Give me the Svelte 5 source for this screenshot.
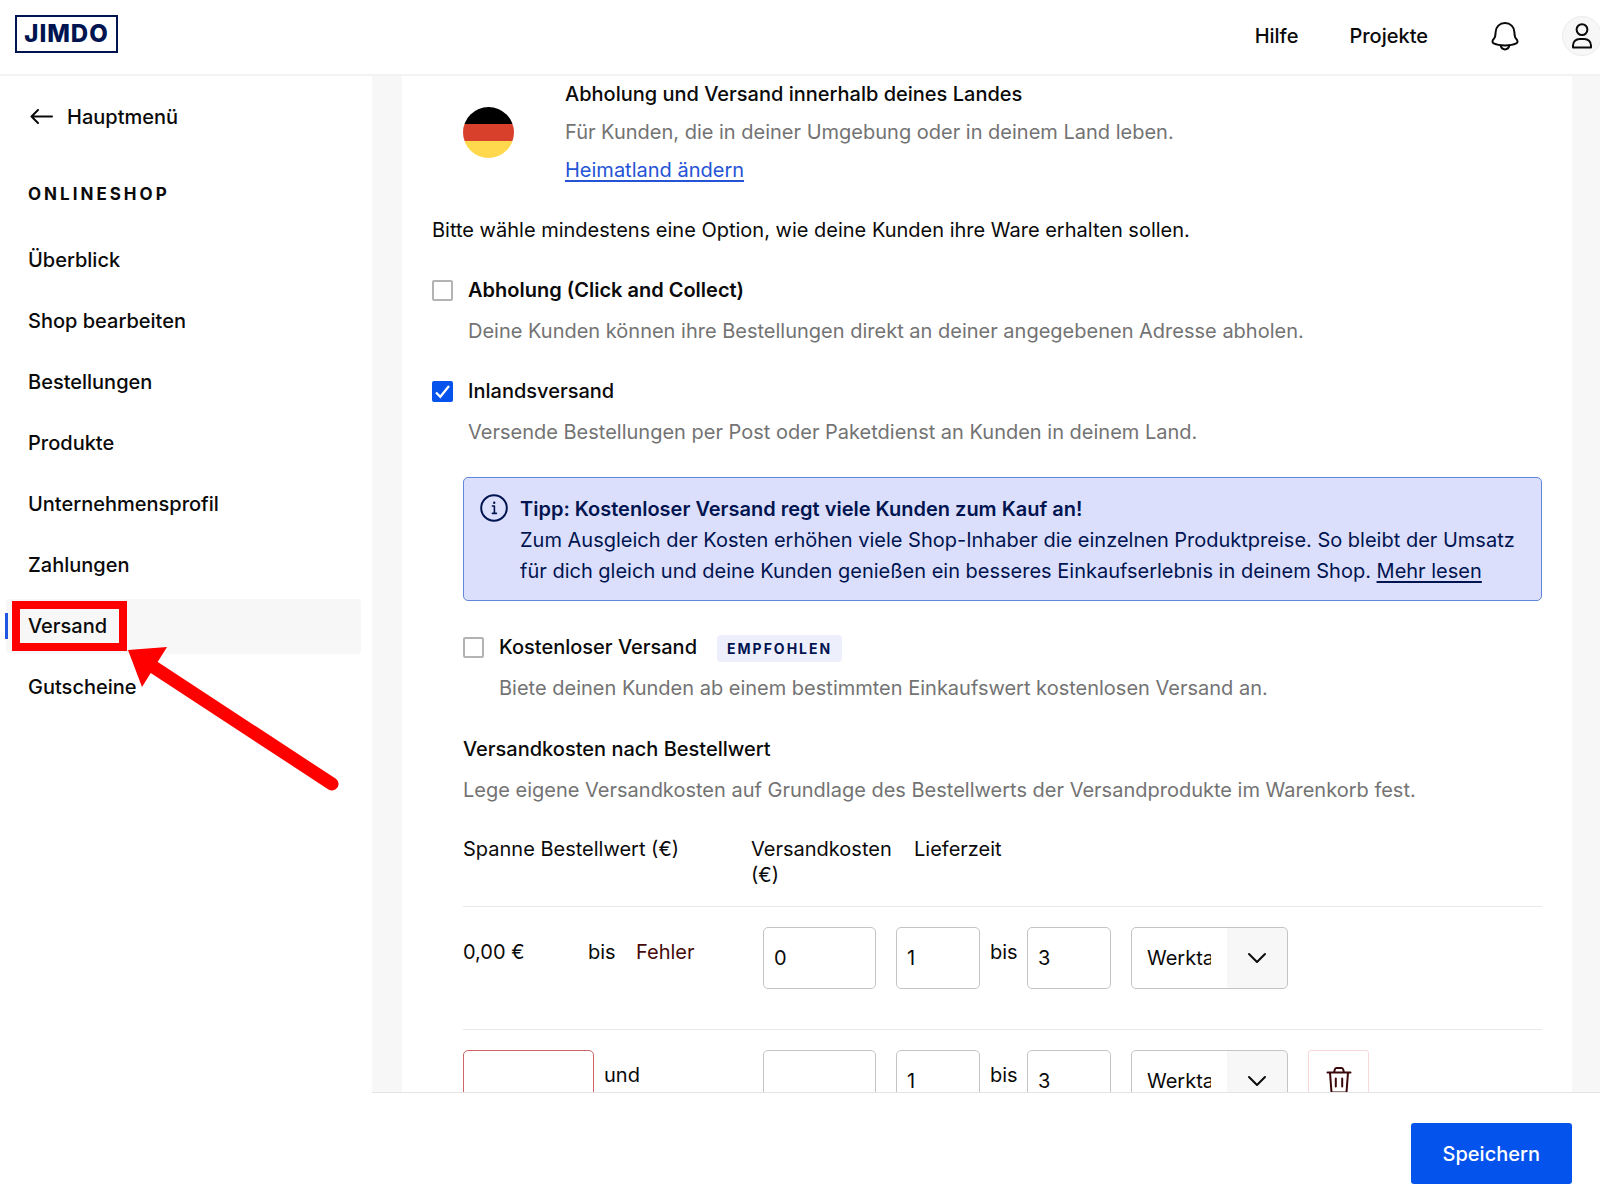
<script>
  const menu = [
    'Überblick',
    'Shop bearbeiten',
    'Bestellungen',
    'Produkte',
    'Unternehmensprofil',
    'Zahlungen',
    'Versand',
    'Gutscheine',
  ];
  const active = 'Versand';

  let pickup = $state(false);
  let domestic = $state(true);
  let free = $state(false);
</script>

{#snippet delivery(row)}
  <input class="field days" aria-label="Lieferzeit von, Zeile {row}" value="1" />
  <span class="between">bis</span>
  <input class="field days" aria-label="Lieferzeit bis, Zeile {row}" value="3" />
  <span class="select">
    <select aria-label="Einheit der Lieferzeit, Zeile {row}">
      <option>Werktage</option>
      <option>Wochen</option>
    </select>
    <svg class="chevron" viewBox="0 0 20 12" aria-hidden="true">
      <path d="M2 2 L10 10 L18 2" />
    </svg>
  </span>
{/snippet}

<div class="app">
  <header class="topbar">
    <a class="logo" href="#start">JIMDO</a>
    <nav class="topnav" aria-label="Konto">
      <a href="#hilfe">Hilfe</a>
      <a href="#projekte">Projekte</a>
      <button class="icon-button bell" aria-label="Benachrichtigungen">
        <svg viewBox="0 0 28 30" aria-hidden="true">
          <path d="M14 2 C8.6 2 4.7 6 4.6 11.3 C4.5 15.2 4.3 16.6 2.7 18 C1.2 19.4 1 21.6 2.7 22.4 C5.4 23.7 9.6 24.4 14 24.4 C18.4 24.4 22.6 23.7 25.3 22.4 C27 21.6 26.8 19.4 25.3 18 C23.7 16.6 23.5 15.2 23.4 11.3 C23.3 6 19.4 2 14 2 Z" />
          <path d="M9.6 24.6 C10.2 27 11.8 28.4 14 28.4 C16.2 28.4 17.8 27 18.4 24.6" />
        </svg>
      </button>
      <button class="icon-button avatar" aria-label="Profil">
        <svg viewBox="0 0 22 28" aria-hidden="true">
          <circle cx="11" cy="7.6" r="5.4" />
          <path d="M2 25.6 V23.6 C2 19.6 5 17 8.6 17 H13.4 C17 17 20 19.6 20 23.6 V25.6 Z" />
        </svg>
      </button>
    </nav>
  </header>

  <div class="body">
    <aside class="sidebar">
      <a class="back" href="#hauptmenue">
        <svg viewBox="0 0 24 16" aria-hidden="true">
          <path d="M22 7.5 H1.5 M8 1 L1.5 7.5 L8 14" />
        </svg>
        Hauptmenü
      </a>
      <h2>Onlineshop</h2>
      <ul>
        {#each menu as item}
          <li>
            <a href="#{item}" class:active={item === active} aria-current={item === active ? 'page' : undefined}>
              {item}
            </a>
            {#if item === active}
              <span class="marker"></span>
              <svg class="pointer" viewBox="0 0 220 150" aria-hidden="true">
                <path class="shaft" d="M32 25 L212 143" />
                <path class="head" d="M8 9 L47 6 L22 46 Z" />
              </svg>
            {/if}
          </li>
        {/each}
      </ul>
    </aside>

    <div class="main">
      <main class="scroll">
        <div class="panel">
          <section class="country">
            <svg class="flag" viewBox="0 0 51 51" role="img" aria-label="Deutschland">
              <clipPath id="round"><circle cx="25.5" cy="25.5" r="25.5" /></clipPath>
              <g clip-path="url(#round)">
                <rect width="51" height="17" fill="#000" />
                <rect y="17" width="51" height="17" fill="#d8402c" />
                <rect y="34" width="51" height="17" fill="#ffd84d" />
              </g>
            </svg>
            <div class="country-text">
              <h3>Abholung und Versand innerhalb deines Landes</h3>
              <p class="muted">Für Kunden, die in deiner Umgebung oder in deinem Land leben.</p>
              <a href="#heimatland">Heimatland ändern</a>
            </div>
          </section>

          <p class="prompt">Bitte wähle mindestens eine Option, wie deine Kunden ihre Ware erhalten sollen.</p>

          <div class="option">
            <label class="strong"><input type="checkbox" bind:checked={pickup} />Abholung (Click and Collect)</label>
            <p class="muted">Deine Kunden können ihre Bestellungen direkt an deiner angegebenen Adresse abholen.</p>
          </div>

          <div class="option">
            <label><input type="checkbox" bind:checked={domestic} />Inlandsversand</label>
            <p class="muted">Versende Bestellungen per Post oder Paketdienst an Kunden in deinem Land.</p>
          </div>

          <div class="nested">
            <div class="tip">
              <svg viewBox="0 0 28 28" aria-hidden="true">
                <circle cx="14" cy="14" r="12.8" />
                <path class="thin" d="M12.4 12 H14.4 V19.2 M12.4 19.4 H16.4" />
                <circle class="dot" cx="14.2" cy="8.8" r="1.2" />
              </svg>
              <div>
                <strong>Tipp: Kostenloser Versand regt viele Kunden zum Kauf an!</strong>
                <p>
                  Zum Ausgleich der Kosten erhöhen viele Shop-Inhaber die einzelnen Produktpreise. So bleibt der Umsatz
                  für dich gleich und deine Kunden genießen ein besseres Einkaufserlebnis in deinem Shop.
                  <a href="#mehr">Mehr lesen</a>
                </p>
              </div>
            </div>

            <div class="option">
              <div class="label-row">
                <label><input type="checkbox" bind:checked={free} />Kostenloser Versand</label>
                <span class="badge">Empfohlen</span>
              </div>
              <p class="muted">Biete deinen Kunden ab einem bestimmten Einkaufswert kostenlosen Versand an.</p>
            </div>

            <div class="costs">
              <h3>Versandkosten nach Bestellwert</h3>
              <p class="muted">Lege eigene Versandkosten auf Grundlage des Bestellwerts der Versandprodukte im Warenkorb fest.</p>
            </div>

            <table>
              <colgroup>
                <col class="c-range" />
                <col class="c-cost" />
                <col class="c-gap" />
                <col />
              </colgroup>
              <thead>
                <tr>
                  <th scope="col">Spanne Bestellwert (€)</th>
                  <th scope="col" colspan="2">Versandkosten (€)</th>
                  <th scope="col">Lieferzeit</th>
                </tr>
              </thead>
              <tbody>
                <tr>
                  <td>
                    <div class="cells">
                      <span class="amount">0,00 €</span>
                      <span class="until">bis</span>
                      <span class="error">Fehler</span>
                    </div>
                  </td>
                  <td class="cost"><input class="field price" aria-label="Versandkosten, Zeile 1" value="0" /></td>
                  <td colspan="2"><div class="cells">{@render delivery(1)}</div></td>
                </tr>
                <tr>
                  <td>
                    <div class="cells">
                      <input class="field limit" aria-label="Bestellwert ab" aria-invalid="true" value="" />
                      <span class="between">und</span>
                    </div>
                  </td>
                  <td class="cost"><input class="field price" aria-label="Versandkosten, Zeile 2" value="" /></td>
                  <td colspan="2">
                    <div class="cells">
                      {@render delivery(2)}
                      <button class="delete" aria-label="Zeile löschen">
                        <svg viewBox="0 0 26 28" aria-hidden="true">
                          <path d="M1.5 6.5 H24.5 M4 6.5 L5.5 26.5 H20.5 L22 6.5 M8 6.2 L9 3 Q9.4 2 10.5 2 H15.5 Q16.6 2 17 3 L18 6.2 M9.8 12.5 V20.5 M16.2 12.5 V20.5" />
                        </svg>
                      </button>
                    </div>
                  </td>
                </tr>
              </tbody>
            </table>
          </div>
        </div>
      </main>

      <footer>
        <button class="save">Speichern</button>
      </footer>
    </div>
  </div>
</div>

<style>
  :global(body) {
    margin: 0;
    background: #fff;
  }

  .app {
    display: flex;
    flex-direction: column;
    height: 100vh;
    overflow: hidden;
    font: 400 20px/30px Inter, 'Liberation Sans', sans-serif;
    color: #0a0a0a;
  }

  .app *,
  .app {
    box-sizing: border-box;
  }

  h2, h3, p, ul {
    margin: 0;
    padding: 0;
  }

  h3 {
    font-size: 20px;
    font-weight: 500;
  }

  input, select, button {
    font: inherit;
    color: inherit;
  }

  svg {
    flex: none;
    fill: none;
    stroke: currentColor;
    stroke-width: 2;
    stroke-linecap: round;
    stroke-linejoin: round;
  }

  .muted {
    color: #737373;
  }

  /* Top bar */
  .topbar {
    display: flex;
    flex: none;
    align-items: flex-start;
    justify-content: space-between;
    height: 76px;
    padding: 15px 0 0 15px;
    border-bottom: 2px solid #f3f3f3;
    overflow: hidden;
  }

  .logo {
    display: flex;
    align-items: center;
    justify-content: center;
    width: 103px;
    height: 38px;
    border: 2px solid #001450;
    color: #001450;
    font-size: 24px;
    font-weight: 800;
    letter-spacing: 1px;
    text-decoration: none;
  }

  .topnav {
    display: flex;
    align-items: center;
    height: 42px;
    margin-right: -2px;
  }

  .topnav a {
    margin-right: 51px;
    color: inherit;
    font-weight: 500;
    text-decoration: none;
  }

  .icon-button {
    display: flex;
    align-items: center;
    justify-content: center;
    padding: 0;
    border: 0;
    background: none;
  }

  .bell {
    width: 28px;
    margin: 0 43px 0 12px;
  }

  .bell svg {
    width: 28px;
    height: 30px;
  }

  .avatar {
    width: 40px;
    height: 40px;
    border: 1px solid #ececec;
    border-radius: 50%;
    background: #f7f7f7;
  }

  .avatar svg {
    width: 22px;
    height: 28px;
  }

  .body {
    display: flex;
    flex: 1;
    min-height: 0;
  }

  /* Sidebar */
  .sidebar {
    flex: none;
    width: 372px;
    padding: 26px 11px 0 6px;
  }

  .back {
    display: flex;
    align-items: center;
    gap: 13px;
    padding-left: 24px;
    color: inherit;
    font-weight: 500;
    text-decoration: none;
  }

  .back svg {
    width: 24px;
    height: 16px;
  }

  .sidebar h2 {
    margin: 47px 0 24px;
    padding-left: 22px;
    font-size: 17px;
    font-weight: 700;
    letter-spacing: 3px;
    text-transform: uppercase;
  }

  .sidebar ul {
    display: flex;
    flex-direction: column;
    gap: 6px;
    list-style: none;
  }

  .sidebar li {
    position: relative;
  }

  .sidebar li a {
    display: block;
    padding: 12px 22px 13px;
    border-radius: 4px;
    color: inherit;
    font-weight: 500;
    text-decoration: none;
  }

  .sidebar li a.active {
    background: #f7f7f7;
  }

  .sidebar li a.active::before {
    content: '';
    position: absolute;
    top: 14px;
    left: -1px;
    width: 3px;
    height: 26px;
    background: #1f57e0;
  }

  .marker {
    position: absolute;
    top: 2px;
    left: 6px;
    width: 115px;
    height: 50px;
    border: 8px solid #fe0000;
  }

  .pointer {
    position: absolute;
    z-index: 1;
    top: 42px;
    left: 114px;
    width: 220px;
    height: 150px;
    pointer-events: none;
  }

  .pointer .shaft {
    stroke: #fe0000;
    stroke-width: 13;
  }

  .pointer .head {
    fill: #fe0000;
    stroke: none;
  }

  /* Content */
  .main {
    display: flex;
    flex: 1;
    flex-direction: column;
    min-width: 0;
  }

  .scroll {
    flex: 1;
    min-height: 0;
    padding: 0 28px 0 30px;
    background: #f7f7f7;
    overflow: hidden;
  }

  .panel {
    display: flex;
    flex-direction: column;
    gap: 30px;
    min-height: 100%;
    padding: 3px 30px 30px;
    background: #fff;
  }

  .country {
    display: flex;
    align-items: center;
    gap: 51px;
    padding-left: 31px;
  }

  .flag {
    width: 51px;
    height: 51px;
    stroke: none;
  }

  .country-text {
    display: flex;
    flex-direction: column;
    align-items: flex-start;
    gap: 8px;
  }

  .country-text a {
    color: #2453d6;
    text-decoration-thickness: 2px;
    text-underline-offset: 3px;
  }

  .option,
  .costs {
    display: flex;
    flex-direction: column;
    gap: 11px;
  }

  .option .muted {
    padding-left: 36px;
  }

  label {
    display: flex;
    align-items: center;
    gap: 15px;
    font-weight: 500;
  }

  label.strong {
    font-weight: 600;
  }

  input[type='checkbox'] {
    appearance: none;
    flex: none;
    width: 21px;
    height: 21px;
    margin: 0;
    border: 2px solid #b3b3b3;
    border-radius: 2px;
    background: #fff;
  }

  input[type='checkbox']:checked {
    border-color: #0453ed;
    background: #0453ed url("data:image/svg+xml,%3Csvg xmlns='http://www.w3.org/2000/svg' viewBox='0 0 17 17'%3E%3Cpath d='M2 9.5 L6.3 13.8 L15 3' fill='none' stroke='white' stroke-width='2.2'/%3E%3C/svg%3E") center / 17px 17px no-repeat;
  }

  .nested {
    display: flex;
    flex-direction: column;
    gap: 31px;
    padding-left: 31px;
  }

  .tip {
    display: flex;
    align-items: flex-start;
    gap: 12px;
    padding: 16px 16px 13px;
    border: 1px solid #5f86d8;
    border-radius: 5px;
    background: #dcdffc;
    color: #001450;
    line-height: 31px;
  }

  .tip svg {
    width: 28px;
    height: 28px;
  }

  .tip .thin {
    stroke-width: 1.6;
  }

  .tip .dot {
    fill: currentColor;
    stroke: none;
  }

  .tip strong {
    font-weight: 600;
  }

  .tip a {
    color: inherit;
    text-decoration-thickness: 2px;
    text-underline-offset: 3px;
  }

  .label-row {
    display: flex;
    align-items: flex-end;
    gap: 20px;
    height: 30px;
  }

  .badge {
    padding: 0 10px;
    border-radius: 4px;
    background: #eeeffd;
    color: #001450;
    font-size: 14px;
    font-weight: 700;
    line-height: 27px;
    letter-spacing: 2px;
    text-transform: uppercase;
  }

  /* Shipping cost table */
  table {
    width: 100%;
    border-collapse: collapse;
    table-layout: fixed;
  }

  .c-range { width: 288px; }
  .c-cost { width: 145px; }
  .c-gap { width: 18px; }

  th {
    padding: 0 0 18px;
    font-weight: 400;
    line-height: 26px;
    text-align: left;
    vertical-align: top;
  }

  td {
    padding: 20px 0 40px;
    vertical-align: top;
  }

  td.cost {
    padding-left: 12px;
  }

  tbody tr {
    border-top: 1px solid #e8e8e8;
  }

  .cells {
    display: flex;
    align-items: flex-start;
  }

  .amount,
  .until,
  .between,
  .error {
    padding-top: 10px;
  }

  .amount { width: 125px; }
  .until { width: 48px; }
  .error { color: #460a0a; }

  .between {
    min-width: 47px;
    padding-left: 10px;
  }

  .field {
    display: block;
    height: 62px;
    padding: 0 10px;
    border: 1px solid #c4c4c4;
    border-radius: 5px;
    background: #fff;
  }

  .price { width: 113px; }
  .days { width: 84px; }

  .limit {
    width: 131px;
    border-color: #cc6666;
  }

  .select {
    position: relative;
    margin-left: 20px;
  }

  select {
    appearance: none;
    display: block;
    width: 157px;
    height: 62px;
    padding: 0 76px 0 15px;
    border: 1px solid #c4c4c4;
    border-radius: 5px;
    background: linear-gradient(#f7f7f7, #f7f7f7) right / 60px 100% no-repeat #fff;
  }

  .chevron {
    position: absolute;
    top: 25px;
    right: 21px;
    width: 20px;
    height: 12px;
    pointer-events: none;
  }

  .delete {
    display: flex;
    justify-content: center;
    width: 61px;
    height: 62px;
    margin-left: 20px;
    padding: 15px 0 0;
    border: 1px solid #f8d8d8;
    border-radius: 3px;
    background: #fff;
    color: #3a0808;
  }

  .delete svg {
    width: 26px;
    height: 28px;
  }

  footer {
    display: flex;
    flex: none;
    justify-content: flex-end;
    padding: 30px 28px 6px;
    border-top: 1px solid #e4e4e4;
    background: #fff;
  }

  .save {
    padding: 16px 32px 15px;
    border: 0;
    border-radius: 3px;
    background: #0453ed;
    color: #fff;
    font-weight: 500;
  }
</style>
